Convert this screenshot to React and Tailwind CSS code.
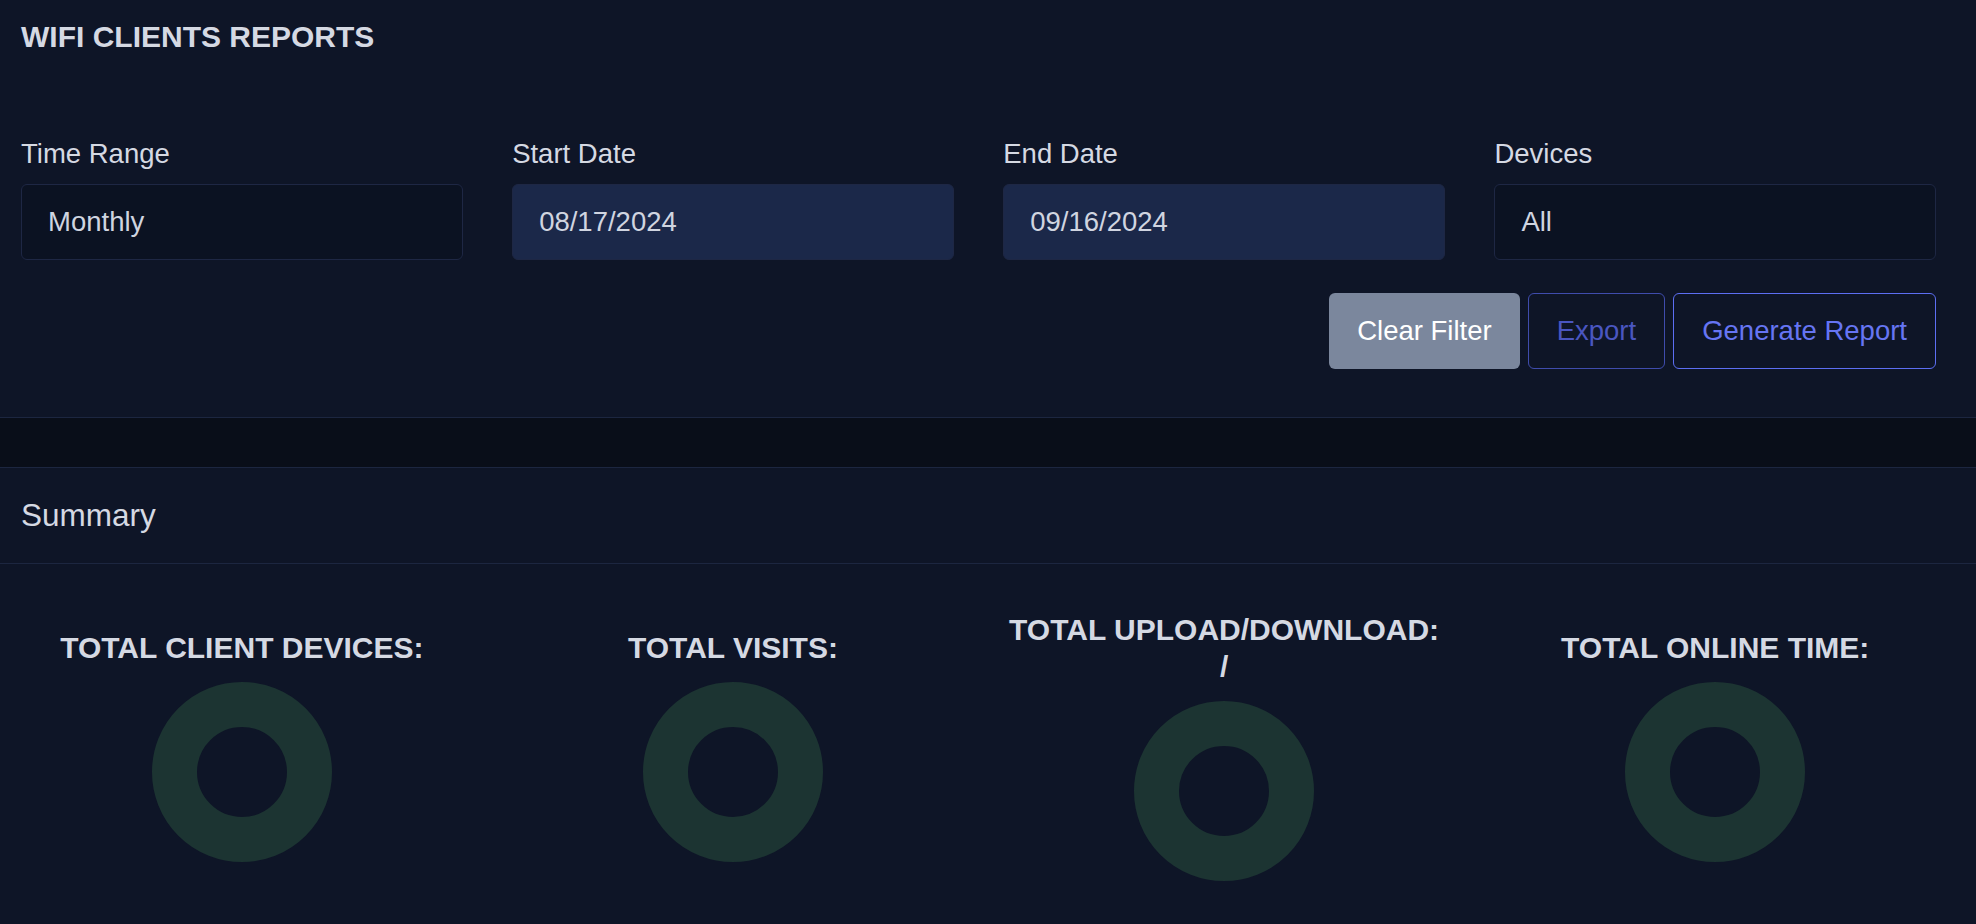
import React from 'react';

const filters = [
  { label: 'Time Range', value: 'Monthly', date: false },
  { label: 'Start Date', value: '08/17/2024', date: true },
  { label: 'End Date', value: '09/16/2024', date: true },
  { label: 'Devices', value: 'All', date: false },
];

const Donut = () => (
  <div className="mt-[15.5px] w-[180px] h-[180px] rounded-full border-[45px] border-[#1c3432]" />
);

const SummaryCard = ({ title, value }) => (
  <div className="flex flex-col items-center">
    <h3 className="text-[30px] font-bold leading-[37.5px] text-center text-[#d5d9e3]">{title}</h3>
    {value !== undefined && (
      <p className="text-[30px] font-bold leading-[37.5px] text-center text-[#d5d9e3]">{value}</p>
    )}
    <Donut />
  </div>
);

const App = () => {
  return (
    <div className="min-h-screen bg-[#0e1527] text-[#d5d9e3] font-['Liberation_Sans',Arial,sans-serif]">
      {/* Filters */}
      <section className="pl-[21px] pr-[40px] pt-[18px] pb-[48.5px] border-b-[1.5px] border-[#1c2640]">
        <h1 className="text-[30px] font-bold leading-[37.5px]">WIFI CLIENTS REPORTS</h1>

        <div className="mt-[78px] grid grid-cols-4 gap-x-[49.5px]">
          {filters.map((f) => (
            <div key={f.label}>
              <label className="block text-[27.5px] leading-[40.5px]">{f.label}</label>
              <div
                className={
                  f.date
                    ? 'mt-[10px] h-[75.5px] flex items-center px-[26px] rounded-[6px] border-[1.5px] border-[#1e2744] bg-[#1b2849] text-[27.5px] text-[#d0d5e0]'
                    : 'mt-[10px] h-[75.5px] flex items-center px-[26px] rounded-[6px] border-[1.5px] border-[#1e2744] bg-[#0b1222] text-[27.5px] text-[#d0d5e0]'
                }
              >
                {f.value}
              </div>
            </div>
          ))}
        </div>

        <div className="mt-[33px] flex justify-end gap-[8px]">
          <button className="h-[76px] px-[28px] rounded-[6px] bg-[#7b879d] text-white text-[27.5px]">
            Clear Filter
          </button>
          <button className="h-[76px] px-[28px] rounded-[6px] border-[1.5px] border-[#3f4cad] text-[#4a56c0] text-[27.5px]">
            Export
          </button>
          <button className="h-[76px] px-[28px] rounded-[6px] border-[1.5px] border-[#5c6ef2] text-[#6675f3] text-[27.5px]">
            Generate Report
          </button>
        </div>
      </section>

      <div className="h-[49px] bg-[#090e19]" />

      {/* Summary */}
      <section className="border-t-[1.5px] border-[#1c2640]">
        <div className="h-[96px] flex items-center px-[21px] border-b-[1.5px] border-[#1c2640]">
          <h2 className="text-[31.5px]">Summary</h2>
        </div>

        <div className="pt-[46.5px] pb-[40px] pl-[21px] pr-[40px] grid grid-cols-4 gap-x-[49.5px] items-center">
          <SummaryCard title="TOTAL CLIENT DEVICES:" />
          <SummaryCard title="TOTAL VISITS:" />
          <SummaryCard title="TOTAL UPLOAD/DOWNLOAD:" value="/" />
          <SummaryCard title="TOTAL ONLINE TIME:" />
        </div>
      </section>
    </div>
  );
};

export default App;
